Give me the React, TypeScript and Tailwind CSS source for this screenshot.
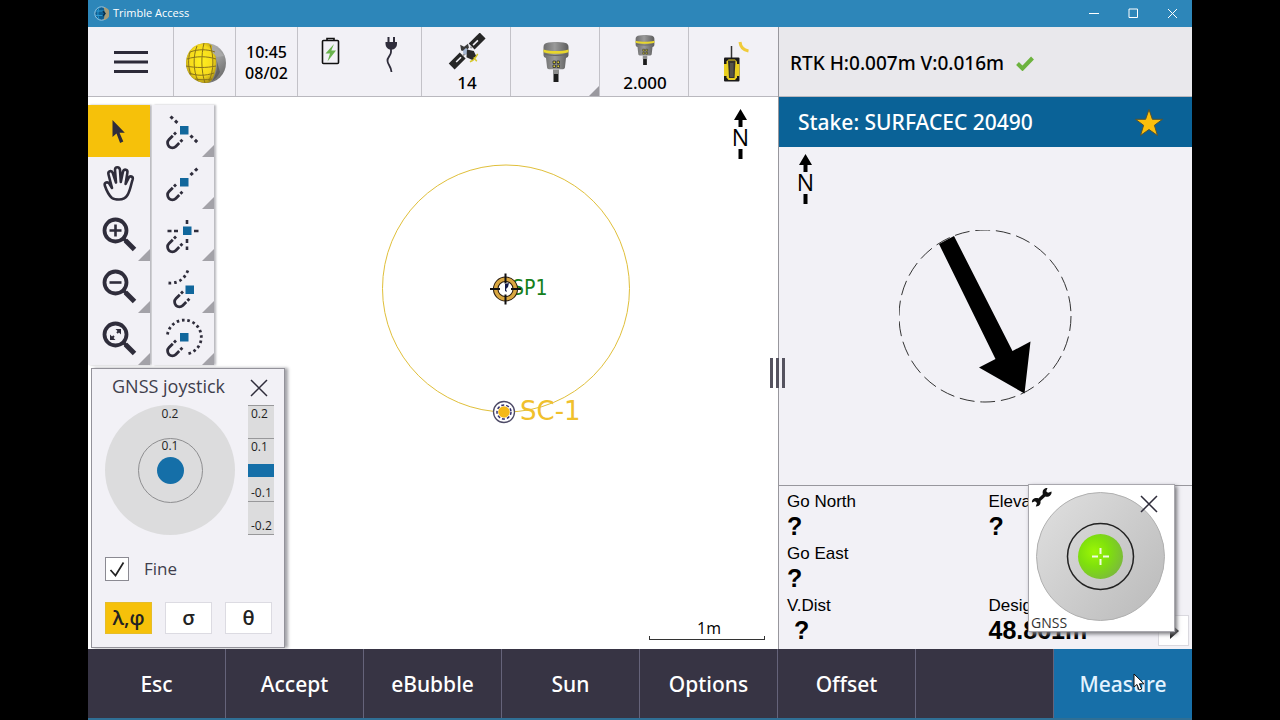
import React, { useState } from 'react';

const INK = '#2f2d3b';
const SNAP_BLUE = '#11679c';

const softKeys = ['Esc', 'Accept', 'eBubble', 'Sun', 'Options', 'Offset', '', 'Measure'];

/* ---------- toolbar icons ---------- */

const AppLogo: React.FC = () => (
  <svg width="15" height="15" viewBox="0 0 15 15" fill="none" aria-hidden="true">
    <circle cx="7.5" cy="7.5" r="6.7" fill="#0d5f93" stroke="#9cc9e2" />
    <path d="M9.5 1.2a6.3 6.3 0 0 1 0 12.6c1.4-3.500 1.400-9 0-12.600z" fill="#a79c77" />
    <path d="M1.500 5h9M1.500 9.500h9M5 1.500c-1.500 4-1.500 8 0 12" stroke="#2fa0da" strokeWidth=".9" />
    <path d="M9 5l2 2.500-2 2.500" stroke="#08304d" strokeWidth="1.500" />
  </svg>
);

const GlobeIcon: React.FC = () => (
  <svg width="42" height="42" viewBox="0 0 42 42" fill="none" aria-hidden="true">
    <defs>
      <linearGradient id="land" x1="0" y1="0" x2="1" y2="1">
        <stop offset="0" stopColor="#c9c9c9" />
        <stop offset=".6" stopColor="#9a9a9a" />
        <stop offset="1" stopColor="#5c5c5c" />
      </linearGradient>
      <radialGradient id="gold" cx=".5" cy=".45" r=".6">
        <stop offset="0" stopColor="#fff01e" />
        <stop offset=".65" stopColor="#f6da1c" />
        <stop offset="1" stopColor="#a38a12" />
      </radialGradient>
    </defs>
    <circle cx="21" cy="21" r="20" fill="url(#land)" />
    <path d="M21 1C9 1 1 10 1 21s9 20 20 20c3 0 4-1 6-3 5-9 6-22 1-33-1-2-4-4-7-4z" fill="url(#gold)" />
    <path d="M27 4c5 3 9 5 12 10l-7 1-5-5z" fill="#a9a9a9" />
    <path d="M31 16c2 8 1 16-4 23 4-2 6-5 8-9z" fill="#444" opacity=".5" />
    <path
      d="M5 10c8-3 17-3 25 0M2 17c9-3 20-3 29 0M1 24c10 2 20 2 30 0M4 31c8 3 16 3 25 0M10 37c5 1 11 1 17 0M12 4C8 14 8 28 13 39M19 1c-3 12-3 28 1 40M25 3c4 11 4 25-1 36M5 10c-2 7-2 15 1 23"
      stroke="#8a7419"
      strokeWidth="1"
    />
  </svg>
);

const BatteryIcon: React.FC = () => (
  <svg width="19" height="28" viewBox="0 0 19 28" fill="none" aria-hidden="true">
    <path d="M6 3.500V1.500h7v2" stroke="#111" strokeWidth="1.600" />
    <rect x="1.500" y="3.500" width="16" height="23" rx="1" stroke="#111" strokeWidth="1.600" />
    <path d="M13 7L4.500 16.500h4.500L6.500 24.500 15 13.500h-4.700z" fill="#69b34c" />
  </svg>
);

const PlugIcon: React.FC = () => (
  <svg width="14" height="36" viewBox="0 0 14 36" fill="none" aria-hidden="true">
    <path d="M4.500 0v6M10 0v6" stroke={INK} strokeWidth="2" />
    <path d="M1.500 5h11.500v2c0 3-2 4.500-4 5.500H5.500c-2-1-4-2.500-4-5.500z" fill={INK} />
    <path d="M7 12v3c0 4-4 5-3.500 9 .400 4 3.500 5 4 11" stroke={INK} strokeWidth="1.800" />
  </svg>
);

const SatelliteIcon: React.FC = () => (
  <svg width="38" height="38" viewBox="0 0 38 38" fill="none" aria-hidden="true">
    <g transform="rotate(-45 19 19)">
      <rect x="-3" y="14.500" width="16" height="8.500" fill="#262626" />
      <rect x="3.500" y="18" width="7" height="1.600" fill="#f2f1f6" />
      <rect x="26" y="14.500" width="16" height="8.500" fill="#262626" />
      <rect x="28" y="18" width="7" height="1.600" fill="#f2f1f6" />
      <path d="M13 19h3M24 19h2" stroke="#999" strokeWidth="2" />
    </g>
    <path d="M12 12l4 2 4-3 1 4-3 4-5-1z" fill="#3a3a3a" />
    <path d="M15 18l3-2.500 3 2.500-3 4.500-3-1.500z" fill="#a5b6d1" />
    <path d="M19 17l7 1.500 2.500 5.500-3.500 4-6.500-3z" fill="#2b2b2b" />
    <path d="M22 29.500c4-1 6-4 8-8M26 25l3 4" stroke="#d6c82a" strokeWidth="1.500" />
  </svg>
);

const ReceiverIcon: React.FC<{ className: string; id: string }> = ({ className, id }) => (
  <svg className={className} viewBox="0 0 26 40" fill="none" aria-hidden="true">
    <defs>
      <linearGradient id={id} x1="0" x2="1">
        <stop offset="0" stopColor="#6c6c6c" />
        <stop offset=".45" stopColor="#9a9a9a" />
        <stop offset="1" stopColor="#5c5c5c" />
      </linearGradient>
    </defs>
    <path d="M.500 5c0-3 2-4 5-4.500 5-.700 10-.700 15 0 3 .500 5 1.500 5 4.500v8c0 1.500-1 2.500-2.500 3l-1 9c0 1.500-1 2-2 2.200H6c-1 0-2-.7-2-2.200l-1-9C1.500 15.500.500 14.500.500 13z" fill={`url(#${id})`} />
    <path d="M.500 7.500c7 2 18 2 25 0v2.800c-7 2-18 2-25 0z" fill="#e8d62c" />
    <path d="M1 12c7 2 17 2 24 0" stroke="#666" />
    <path d="M10 19h2.500v2.500H10zM14 19h2.500v2.500H14zM10 23h2.500v2.500H10zM14 23h2.500v2.500H14z" fill="#d8cb3a" stroke="#2e2e2e" strokeWidth=".8" />
    <path d="M10 27.500h6V32h-6z" fill="#8c8c8c" />
    <path d="M10.500 32h5v8h-5z" fill="#1c1c1c" />
  </svg>
);

const RadioIcon: React.FC = () => (
  <svg width="30" height="42" viewBox="0 0 30 42" fill="none" aria-hidden="true">
    <path d="M8.500 5v12" stroke="#333" strokeWidth="1.500" />
    <path d="M17 1c.500 5 3 8 8.500 9" stroke="#f0cb3a" strokeWidth="3" />
    <rect x="1" y="16.500" width="15.500" height="24" rx="1" fill="#1a1a1a" />
    <path d="M1 23h3.500v12H1zM13 23h3.500v12H13z" fill="#e9cf1f" />
    <path d="M3.500 20.500l2-2h6.500l2 2v16l-2 2.500H5.500l-2-2.500z" fill="#e9cf1f" />
    <path d="M5 19.500h7.500l-1 17.500H6z" fill="#34322c" />
    <path d="M7 22h3.500v14H7z" fill="#54524a" />
  </svg>
);

/* ---------- map tool icons, all drawn on the 62x52 cell ---------- */

const Magnet: React.FC<{ x?: number; y?: number }> = ({ x = 0, y = 0 }) => (
  <g transform={`translate(${x} ${y})`} stroke={INK} strokeWidth="2.800">
    <path d="M20.800 30.800L17 34.600a4.700 4.700 0 0 0 6.800 6.800l3.400-3.400" />
    <path d="M22 29.600l2-2M28.400 36.800l2-2" />
  </g>
);

const Loupe: React.FC<{ children: React.ReactNode }> = ({ children }) => (
  <g stroke={INK}>
    <circle cx="27.500" cy="21.500" r="11" strokeWidth="3.800" />
    <path d="M35 29l3 3" strokeWidth="3.500" />
    <path d="M37.500 31.500l9 9" strokeWidth="5" />
    {children}
  </g>
);

const viewTools = [
  {
    name: 'Select',
    corner: false,
    icon: <path d="M24.500 15v17l4-3.600 3.600 9.600 3.200-1.400-3.800-8.900h5.300z" fill={INK} />,
  },
  {
    name: 'Pan',
    corner: false,
    icon: (
      <path
        d="M24 41C20.500 38 18.500 33.500 16.800 28.500 16 25.500 19.600 24.300 21.400 26.800L24 31 20.500 17.500C19.600 14 23.600 12.800 24.800 16L28 25.500 27 13C27 9.400 31.600 9.400 32 13L32.800 25 35 14.500C36 11.400 40 12.400 39.400 15.600L37.600 27 40.600 21C42 18 45.600 19.600 44.600 22.600 43 27 42.500 33 39.500 38 37.500 41.500 34.500 42.500 31 42.500 28 42.500 26 42.500 24 41Z"
        stroke={INK}
        strokeWidth="2.600"
        strokeLinejoin="round"
      />
    ),
  },
  {
    name: 'Zoom in',
    corner: true,
    icon: <Loupe><path d="M21.500 21.500h12M27.500 15.500v12" strokeWidth="2.600" /></Loupe>,
  },
  {
    name: 'Zoom out',
    corner: true,
    icon: <Loupe><path d="M21.500 21.500h12" strokeWidth="2.600" /></Loupe>,
  },
  {
    name: 'Zoom extents',
    corner: true,
    icon: (
      <Loupe>
        <path d="M23.500 25.500l2.500-2.500M29 20l2.500-2.500" strokeWidth="2" />
        <path d="M22 21.500v5.500h5.500zM27.500 16H33v5.500z" fill={INK} stroke="none" />
      </Loupe>
    ),
  },
];

const snapTools = [
  {
    name: 'Snap to point',
    icon: (
      <>
        <path d="M18.500 11.500l7 6.500M38.500 30.500l8 8" stroke={INK} strokeWidth="3" strokeDasharray="3.200 3" />
        <rect x="28" y="21" width="8.500" height="8.500" fill={SNAP_BLUE} />
        <Magnet />
      </>
    ),
  },
  {
    name: 'Snap to line end',
    icon: (
      <>
        <path d="M38.500 18l8.500-8" stroke={INK} strokeWidth="3" strokeDasharray="3.200 3" />
        <rect x="28" y="21" width="8.500" height="8.500" fill={SNAP_BLUE} />
        <Magnet />
      </>
    ),
  },
  {
    name: 'Snap to intersection',
    icon: (
      <>
        <path d="M15.500 22h4M22 22h4M42 22h4.500M35 11v4M35 30v4M35 37.500v3.500" stroke={INK} strokeWidth="2.600" />
        <rect x="31" y="17.500" width="8.500" height="8.500" fill={SNAP_BLUE} />
        <Magnet />
      </>
    ),
  },
  {
    name: 'Snap to curve',
    icon: (
      <>
        <path d="M16.500 22c9 .500 16-3 20-14" stroke={INK} strokeWidth="2.800" strokeDasharray="2.600 3" />
        <rect x="33.500" y="24.500" width="8.500" height="8.500" fill={SNAP_BLUE} />
        <Magnet x={7} y={3} />
      </>
    ),
  },
  {
    name: 'Snap to circle',
    icon: (
      <>
        <path d="M15.500 21.500A17 17 0 1 1 34 41" stroke={INK} strokeWidth="2.800" strokeDasharray="2.600 2.800" />
        <rect x="28" y="20" width="8.500" height="8.500" fill={SNAP_BLUE} />
        <Magnet />
      </>
    ),
  },
];

const Corner: React.FC = () => (
  <svg className="absolute right-0 bottom-0" width="12" height="12" viewBox="0 0 12 12" aria-hidden="true">
    <path d="M12 0v12H0z" fill="#a3a2a8" />
  </svg>
);

const ToolButton: React.FC<{ name: string; active?: boolean; corner?: boolean; icon: React.ReactNode }> = ({ name, active, corner, icon }) => (
  <button aria-label={name} className={`relative block ${active ? 'bg-[#f6c10a]' : 'bg-[#f2f1f6]'}`}>
    <svg className="block" width="62" height="52" viewBox="0 0 62 52" fill="none" aria-hidden="true">
      {icon}
    </svg>
    {corner && <Corner />}
  </button>
);

const Compass: React.FC = () => (
  <svg width="18" height="50" viewBox="0 0 18 50" aria-label="North">
    <path d="M8.500 0l6.500 11h-4.500v7h-4v-7H2zM6.500 40h4v10h-4z" />
    <text x="8.500" y="37" textAnchor="middle" fontSize="23" fontFamily="'Open Sans', sans-serif">N</text>
  </svg>
);

const CloseX: React.FC = () => (
  <svg width="18" height="18" viewBox="0 0 18 18" fill="none" stroke="#2f2d3b" strokeWidth="1.500" aria-hidden="true">
    <path d="M1 1l16 16M17 1L1 17" />
  </svg>
);

/* ---------- floating panels ---------- */

const Joystick: React.FC = () => {
  const [fine, setFine] = useState(true);
  const [mode, setMode] = useState('λ,φ');

  return (
    <section className="mt-[3px] ml-[3px] flex h-[280px] w-[194px] flex-col border border-[#93929a] bg-[#f2f1f6] px-3 pt-2 shadow-[3px_0_3px_#a5a5aa]">
      <header className="flex h-[22px] items-center justify-between pr-1 pl-2">
        <h2 className="pb-1 text-[18px] leading-5 text-[#403e4c]">GNSS joystick</h2>
        <button aria-label="Close joystick">
          <CloseX />
        </button>
      </header>

      <div className="mt-[6px] flex justify-between pl-[1px] text-[12px] leading-[18px] text-[#1f1f1f]">
        <div className="relative flex size-[130px] items-center justify-center rounded-full bg-[#dcdcdd]">
          <span className="absolute inset-x-0 top-0 text-center">0.2</span>
          <div className="flex size-[65px] items-center justify-center rounded-full border border-[#8e8e90]">
            <div className="size-[27px] rounded-full bg-[#156fa8]" />
          </div>
          <span className="absolute inset-x-0 top-8 text-center">0.1</span>
        </div>
        <div className="relative mr-[-2px] h-[130px] w-[26px] bg-[#dcdcdd]">
          <div className="flex h-full flex-col justify-between border-y border-[#98989a] pl-[3px] leading-4">
            <span className="h-8">0.2</span>
            <span className="-ml-[3px] h-8 border-t border-[#98989a] pl-[3px]">0.1</span>
            <span className="-ml-[3px] flex h-8 items-end border-b border-[#98989a] pl-[3px]">-0.1</span>
            <span className="flex h-8 items-end">-0.2</span>
          </div>
          <input
            type="range"
            aria-label="Height"
            min="-2"
            max="2"
            defaultValue="0"
            className="absolute inset-0 h-full w-full cursor-pointer appearance-none bg-transparent [writing-mode:vertical-lr] [&::-webkit-slider-thumb]:h-[13px] [&::-webkit-slider-thumb]:w-[26px] [&::-webkit-slider-thumb]:appearance-none [&::-webkit-slider-thumb]:bg-[#156fa8]"
          />
        </div>
      </div>

      <label className="mt-[22px] flex items-center gap-[15px] pl-[1px] text-[17px] leading-6 text-[#403e4c]">
        <span className="relative size-6">
          <input
            type="checkbox"
            checked={fine}
            onChange={(e) => setFine(e.target.checked)}
            className="block size-6 appearance-none border border-[#8b8a92] bg-white"
          />
          {fine && (
            <svg className="pointer-events-none absolute inset-0" width="24" height="24" viewBox="0 0 24 24" fill="none" aria-hidden="true">
              <path d="M5.500 13l5 5.500L18.500 5.500" stroke="#222" strokeWidth="1.700" />
            </svg>
          )}
        </span>
        Fine
      </label>

      <div className="mt-[21px] flex gap-[13px] pl-[1px]">
        {['λ,φ', 'σ', 'θ'].map((m) => (
          <button
            key={m}
            onClick={() => setMode(m)}
            className={`h-8 w-[47px] border text-[20px] leading-[30px] font-semibold text-[#222] ${
              mode === m ? 'border-[#e6bd2a] bg-[#f6c10a]' : 'border-[#dcdbe2] bg-white'
            }`}
          >
            {m}
          </button>
        ))}
      </div>
    </section>
  );
};

const BubblePanel: React.FC = () => (
  <section className="absolute right-[17px] bottom-[17px] z-10 h-[148px] w-[147px] border border-[#a9a8ae] bg-white shadow-[2px_2px_4px_#77777c]">
    <svg className="absolute top-[7px] left-[7px]" width="129" height="129" viewBox="0 0 129 129" fill="none" aria-hidden="true">
      <defs>
        <linearGradient id="dish" x1="0" y1="0" x2="1" y2=".8">
          <stop offset="0" stopColor="#e0e0e0" />
          <stop offset="1" stopColor="#bdbdbd" />
        </linearGradient>
        <radialGradient id="bubble" cx=".36" cy=".4" r=".65">
          <stop offset="0" stopColor="#9cf704" />
          <stop offset=".5" stopColor="#7fe00d" />
          <stop offset="1" stopColor="#7bbd38" />
        </radialGradient>
      </defs>
      <circle cx="64.500" cy="64.500" r="64" fill="url(#dish)" stroke="#b0b0b0" />
      <circle cx="64.500" cy="64.500" r="33" stroke="#222" strokeWidth="1.500" />
      <circle cx="64.500" cy="64.500" r="22.500" fill="url(#bubble)" />
      <path d="M56 64.500h6M67 64.500h6M64.500 56v6M64.500 67v6" stroke="#f2fbe2" strokeWidth="2" />
    </svg>
    <button aria-label="Bubble settings" className="absolute top-[2px] left-[2px]">
      <svg width="22" height="21" viewBox="0 0 22 21" fill="none" aria-hidden="true">
        <path d="M6.500 14.500L14.500 7" stroke="#111" strokeWidth="3.200" />
        <path d="M20.500 4.500l-3.500 1.300-1.800-1.500L16.500 1C13 .800 11 3.500 11.800 7l3 2.800c3.400.500 6.200-1.800 5.700-5.300zM1 15.500l3-1.200 2 1.800L4.800 19.500c3.400.200 5.400-2.500 4.600-5.700L6.700 11C3.200 10.400.500 12.500 1 15.500z" fill="#111" />
      </svg>
    </button>
    <button aria-label="Close bubble" className="absolute top-[10px] right-4">
      <CloseX />
    </button>
    <h2 className="absolute bottom-0 left-[2px] text-[14px] leading-4 text-[#333]">GNSS</h2>
  </section>
);

const Reading: React.FC<{ label: string; value: string }> = ({ label, value }) => (
  <div className="h-[52px]">
    <dt className="text-[17px] leading-6">{label}</dt>
    <dd className="text-[25px] leading-6 font-bold whitespace-pre">{value}</dd>
  </div>
);

const Cell: React.FC<{ className: string; label: string; children: React.ReactNode }> = ({ className, label, children }) => (
  <button aria-label={label} className={`relative border-r border-[#c3c2c8] ${className}`}>
    {children}
  </button>
);

export default function App() {
  return (
    <div className="flex min-h-screen flex-col bg-black px-[88px] font-['Open_Sans',sans-serif] text-black">
      <header className="flex h-[27px] items-center bg-[#2d86b9] pl-[6px] text-[11px] text-white">
        <AppLogo />
        <h1 className="ml-1 flex-1">Trimble Access</h1>
        {[
          ['Minimize', 'M0 5.500h10'],
          ['Maximize', 'M1 1h8.500v8.500H1z'],
          ['Close', 'M1 1l9 9M10 1l-9 9'],
        ].map(([name, d]) => (
          <button key={name} aria-label={name} className="flex h-full w-[39px] items-center justify-center">
            <svg width="11" height="11" viewBox="0 0 11 11" fill="none" stroke="#fff" aria-hidden="true">
              <path d={d} />
            </svg>
          </button>
        ))}
      </header>

      <main className="flex flex-1">
        <div className="flex w-5/8 flex-col">
          <nav className="flex h-[70px] border-b border-[#b9b8be] bg-[#f2f1f6] font-['Noto_Sans',sans-serif] font-medium">
            <Cell label="Menu" className="flex w-[86px] items-center justify-center">
              <svg width="34" height="22" viewBox="0 0 34 22" stroke="#2c2a38" strokeWidth="3" aria-hidden="true">
                <path d="M0 1.500h34M0 11h34M0 20.500h34" />
              </svg>
            </Cell>
            <Cell label="Project" className="flex w-[62px] items-center justify-center pt-[2px] pl-[2px]">
              <GlobeIcon />
            </Cell>
            <Cell label="Clock" className="w-[62px] pt-[2px] text-[16px] leading-[21px]">
              10:45
              <br />
              08/02
            </Cell>
            <Cell label="Power" className="flex w-[124px] items-start pt-[10px] pl-[2px]">
              <span className="flex w-1/2 justify-center"><BatteryIcon /></span>
              <span className="flex w-1/2 justify-center"><PlugIcon /></span>
            </Cell>
            <Cell label="Satellites" className="flex w-[89px] flex-col items-center pt-[6px] pl-[2px] text-[17px] leading-[26px]">
              <SatelliteIcon />
              14
            </Cell>
            <Cell label="Receiver" className="flex w-[89px] items-center justify-center pl-[2px]">
              <ReceiverIcon id="rx" className="h-10 w-[26px]" />
              <svg className="absolute right-0 bottom-0" width="10" height="10" viewBox="0 0 10 10" aria-hidden="true">
                <path d="M10 0v10H0z" fill="#9a999f" />
              </svg>
            </Cell>
            <Cell label="Antenna height" className="flex w-[89px] flex-col items-center pt-2 pl-[2px] text-[17px] leading-[26px]">
              <ReceiverIcon id="ant" className="mb-[5px] h-[31px] w-5" />
              2.000
            </Cell>
            <Cell label="Radio" className="flex flex-1 justify-center border-r-0 pt-[14px] pl-2">
              <RadioIcon />
            </Cell>
          </nav>

          <div className="relative flex-1 overflow-hidden bg-white pt-2">
            <svg className="absolute top-0 left-0" width="690" height="552" viewBox="0 0 690 552" fill="none">
              <circle cx="418" cy="191.500" r="123.500" stroke="#e0bf3a" />
              <text x="424" y="198" fontSize="21" fill="#15801b" fontFamily="'DejaVu Sans Condensed', 'DejaVu Sans', sans-serif">SP1</text>
              <circle cx="417.500" cy="192" r="9.800" fill="#fff" stroke="#2b1d10" strokeWidth="5.500" />
              <circle cx="417.500" cy="192" r="9.800" stroke="#d9a741" strokeWidth="3.400" />
              <path d="M402 192h10M423 192h10M417.500 176.500v10M417.500 197.500v10" stroke="#111" strokeWidth="2" />
              <path d="M417 187l4-1-1 4-2 2 1 3-2-1z" fill="#121a4a" />
              <circle cx="416" cy="315" r="10.500" fill="#fff" stroke="#4d4a66" strokeWidth="1.300" />
              <circle cx="416" cy="315" r="7" stroke="#332f6b" strokeWidth="1.500" strokeDasharray="3 2" />
              <circle cx="416" cy="315" r="5.800" fill="#f5b916" />
              <text x="432" y="323" fontSize="26" fill="#f0c02c" fontFamily="'DejaVu Sans', sans-serif">SC-1</text>
            </svg>

            <div className="relative flex w-max gap-[2px]">
              <div className="shadow-[2px_0_2px_#b9b9be]">
                {viewTools.map((t, i) => (
                  <ToolButton key={t.name} active={i === 0} {...t} />
                ))}
              </div>
              <div className="shadow-[2px_0_2px_#b9b9be]">
                {snapTools.map((t) => (
                  <ToolButton key={t.name} corner {...t} />
                ))}
              </div>
            </div>
            <div className="relative w-max">
              <Joystick />
            </div>

            <div className="absolute top-3 right-7">
              <Compass />
            </div>
            <div className="absolute right-[13px] bottom-[9px] w-[116px] text-center text-[16px] leading-4">
              <span className="pl-1">1m</span>
              <div className="h-1 border border-t-0 border-[#333]" />
            </div>
          </div>
        </div>

        <div className="relative flex w-3/8 flex-col border-l border-[#98979d] bg-[#f2f1f6]">
          <div className="flex h-[70px] items-center gap-3 border-b border-[#b9b8be] bg-[#e9e8ec] px-[11px] pt-1 font-['Noto_Sans',sans-serif] text-[19px] font-medium">
            RTK H:0.007m V:0.016m
            <svg width="18" height="15" viewBox="0 0 18 15" fill="none" aria-label="OK">
              <path d="M1.500 7.500l5 5L16.500 2" stroke="#6db33f" strokeWidth="4" />
            </svg>
          </div>
          <div className="flex h-[50px] items-center justify-between bg-[#0a6297] pt-[2px] pr-[29px] pl-[19px] text-white">
            <h2 className="font-['Noto_Sans',sans-serif] text-[21px] font-medium">Stake: SURFACEC 20490</h2>
            <button aria-label="Favorite">
              <svg width="28" height="28" viewBox="0 0 28 28" aria-hidden="true">
                <path d="M14 .500l3.400 9.800H27.500l-8.100 6L22.500 26.500 14 20.500l-8.500 6 3.100-10.200-8.100-6h10.100z" fill="#fbbf0c" stroke="#57532f" />
              </svg>
            </button>
          </div>

          <div className="relative flex flex-1 items-center justify-center">
            <div className="absolute top-[7px] left-[18px]">
              <Compass />
            </div>
            <svg width="173" height="173" viewBox="0 0 173 173" fill="none" aria-label="Direction to target">
              <circle cx="86" cy="86" r="86" stroke="#333" strokeDasharray="15 5.780" />
              <path d="M40 14L55 6 113.500 121 131.500 111.500 125.500 163.500 80 137.500 96.500 129Z" fill="#000" />
            </svg>
            <button aria-label="Resize panels" className="absolute top-[211px] left-[-9px] flex gap-[3px]">
              <span className="h-[30px] w-[3px] bg-[#55535f]" />
              <span className="h-[30px] w-[3px] bg-[#55535f]" />
              <span className="h-[30px] w-[3px] bg-[#55535f]" />
            </button>
          </div>

          <div className="relative h-[164px] border-t border-[#98979d] pt-1 pr-[2px] pl-2 font-['Liberation_Sans',sans-serif]">
            <dl className="grid grid-cols-2">
              <Reading label="Go North" value="?" />
              <Reading label="Elevation" value="?" />
              <div className="col-span-2">
                <Reading label="Go East" value="?" />
              </div>
              <Reading label="V.Dist" value=" ?" />
              <Reading label="Design elev" value="48.861m" />
            </dl>
            <button aria-label="Next page" className="absolute right-[3px] bottom-[3px] flex h-[31px] w-[31px] items-center justify-center border border-[#dad9df] bg-white">
              <svg width="12" height="16" viewBox="0 0 12 16" aria-hidden="true">
                <path d="M2 0l9 8-9 8z" fill="#222" />
              </svg>
            </button>
            <div className="font-['Open_Sans',sans-serif]">
              <BubblePanel />
            </div>
          </div>
        </div>
      </main>

      <footer className="relative grid h-[71px] grid-cols-8 border-b-2 border-[#2f6f95] bg-[#373444] font-['Noto_Sans',sans-serif]">
        {softKeys.map((key, i) => (
          <button
            key={i}
            aria-label={key || 'Unassigned'}
            className={`pt-[2px] text-[21px] font-medium ${
              key === 'Measure' ? 'bg-[#176fa8] text-[#e3f3ff]' : 'border-r border-[#65637a] text-white'
            }`}
          >
            {key}
          </button>
        ))}
        <svg className="pointer-events-none absolute top-6 right-[47px]" width="12" height="18" viewBox="0 0 12 18" aria-hidden="true">
          <path d="M1 1v13l3-2.500L6.200 17l2.500-1-2.300-5.200H11z" fill="#fff" stroke="#111" />
        </svg>
      </footer>
    </div>
  );
}
